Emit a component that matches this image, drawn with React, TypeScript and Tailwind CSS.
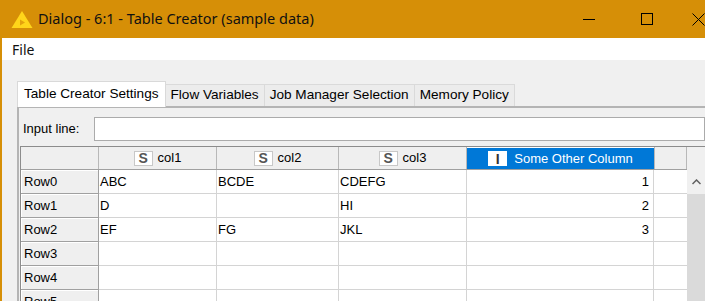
import React from "react";

const COLS = [
  { name: "col1", type: "S", w: "w-[118px]" },
  { name: "col2", type: "S", w: "w-[122px]" },
  { name: "col3", type: "S", w: "w-[128px]" },
];

const ROWS = [
  { key: "Row0", cells: ["ABC", "BCDE", "CDEFG"], num: "1" },
  { key: "Row1", cells: ["D", "", "HI"], num: "2" },
  { key: "Row2", cells: ["EF", "FG", "JKL"], num: "3" },
  { key: "Row3", cells: ["", "", ""], num: "" },
  { key: "Row4", cells: ["", "", ""], num: "" },
  { key: "Row5", cells: ["", "", ""], num: "" },
];

const TABS = ["Flow Variables", "Job Manager Selection", "Memory Policy"];

function KnimeIcon() {
  return (
    <svg width="22" height="19" viewBox="0 0 22 19">
      <polygon points="11,1 21.5,18 0.5,18" fill="#ffd51a" />
      <polygon points="9,9.5 14,12.5 9,15.5" fill="#e3a20d" />
    </svg>
  );
}

function WindowControls() {
  return (
    <div className="ml-auto flex h-full items-center">
      <div className="flex w-[58px] justify-center">
        <div className="h-px w-[12px] bg-black" />
      </div>
      <div className="flex w-[58px] justify-center">
        <div className="h-[12px] w-[12px] border border-black" />
      </div>
      <div className="flex w-[29px] justify-end">
        <svg width="13" height="13" viewBox="0 0 13 13">
          <path d="M0.5 0.5 L12.5 12.5 M12.5 0.5 L0.5 12.5" stroke="#000" strokeWidth="1" />
        </svg>
      </div>
    </div>
  );
}

function TypeBadge({ type, selected }: { type: string; selected?: boolean }) {
  return (
    <span
      className={`flex h-[15px] w-[19px] items-center justify-center border text-[14px] font-bold leading-none ${
        selected ? "border-white bg-white text-[#333]" : "border-[#c8c8c8] bg-white text-[#555]"
      }`}
    >
      {type}
    </span>
  );
}

function ColHeader({ name, type, w }: { name: string; type: string; w: string }) {
  return (
    <div className={`${w} flex h-full items-center justify-center gap-[5px] border-r border-[#b8b8b8] bg-[#efefef]`}>
      <TypeBadge type={type} />
      <span>{name}</span>
    </div>
  );
}

function RowHeader({ label }: { label: string }) {
  return (
    <div className="flex h-full w-[78px] items-center border-b border-r border-[#a0a0a0] bg-[#efefef] pl-[3px] shadow-[inset_1px_1px_0_#ffffff]">
      {label}
    </div>
  );
}

export default function App() {
  return (
    <div className="h-[301px] w-[705px] overflow-hidden bg-[#f0f0f0] font-['Liberation_Sans',Arial,sans-serif] text-[13px] text-black">
      <div className="flex h-[38px] items-center bg-[#d68f07] pl-[11px] font-['Noto_Sans',sans-serif] text-[14.5px] text-[#111]">
        <KnimeIcon />
        <span className="ml-[5px] pb-[1px]">Dialog - 6:1 - Table Creator (sample data)</span>
        <WindowControls />
      </div>

      <div className="h-[263px] border-l-2 border-[#d68f07]">
        <div className="flex h-[22px] items-center bg-white pl-[10px] font-['Noto_Sans',sans-serif] text-[14px] text-[#111]">
          File
        </div>

        <div className="pl-[15px] pt-[21px]">
          <div className="flex h-[25px] items-end text-[13.6px]">
            <div className="flex h-[26px] items-center self-start border border-b-0 border-[#d9d9d9] bg-white px-[6px]">
              Table Creator Settings
            </div>
            {TABS.map((t) => (
              <div
                key={t}
                className="flex h-[22px] items-center border-r border-t border-[#dadada] bg-[#ececec] px-[5px]"
              >
                {t}
              </div>
            ))}
          </div>

          <div className="border-l-2 border-t-2 border-[#b4b4b4] pl-[1px]">
            <div className="mt-[9px] flex h-[24px] items-center pl-[3px]">
              <span className="w-[71px]">Input line:</span>
              <div className="h-[24px] flex-1 border border-[#ababab] bg-white" />
            </div>

            <div className="mt-[5px] flex border-l border-t border-[#8c8c8c]">
              <div className="flex flex-col">
                <div className="flex h-[23px] border-b border-[#a0a0a0]">
                  <div className="h-full w-[78px] border-r border-[#b8b8b8] bg-[#efefef]" />
                  {COLS.map((c) => (
                    <ColHeader key={c.name} {...c} />
                  ))}
                  <div className="flex h-full w-[187px] items-center justify-center gap-[7px] border-t border-white bg-[#0078d7] text-white">
                    <TypeBadge type="I" selected />
                    <span>Some Other Column</span>
                  </div>
                  <div className="h-full w-[33px] border-l border-r border-[#b8b8b8] bg-[#efefef]" />
                </div>

                {ROWS.map((r) => (
                  <div key={r.key} className="flex h-[24px]">
                    <RowHeader label={r.key} />
                    {r.cells.map((c, i) => (
                      <div
                        key={i}
                        className={`${COLS[i].w} flex h-full items-center border-b border-r border-[#d4d4d4] bg-white pl-px`}
                      >
                        {c}
                      </div>
                    ))}
                    <div className="flex h-full w-[187px] items-center justify-end border-b border-r border-[#d4d4d4] bg-white pr-[4px]">
                      {r.num}
                    </div>
                    <div className="h-full w-[33px] border-b border-[#d4d4d4] bg-white" />
                  </div>
                ))}
              </div>

              <div className="flex w-[19px] flex-col bg-[#f0f0f0]">
                <div className="h-[23px]" />
                <div className="flex h-[24px] items-center justify-center">
                  <svg width="9" height="6" viewBox="0 0 9 6">
                    <path d="M0.5 5 L4.5 1 L8.5 5" stroke="#606060" strokeWidth="1.5" fill="none" />
                  </svg>
                </div>
                <div className="flex-1 bg-[#dadada]" />
              </div>
            </div>
          </div>
        </div>
      </div>
    </div>
  );
}
